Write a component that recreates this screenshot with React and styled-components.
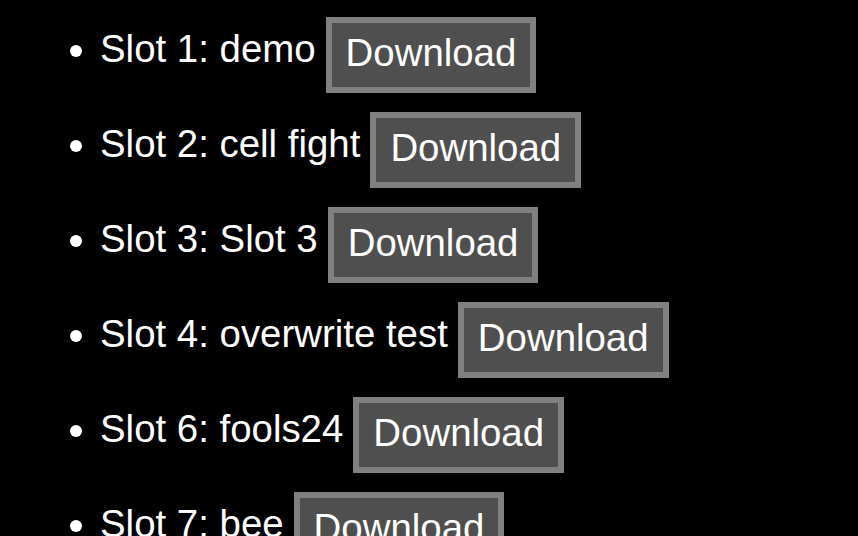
import React from "react";
import styled, { createGlobalStyle } from "styled-components";

const Global = createGlobalStyle`
  html, body {
    margin: 0;
    padding: 0;
    background: #000;
    overflow: hidden;
  }
  body {
    font-family: "Liberation Sans", Arial, Helvetica, sans-serif;
    color: #fff;
  }
`;

const Page = styled.div`
  height: 100vh;
  overflow: hidden;
  background: #000;
`;

const SlotList = styled.ul`
  margin: 0;
  padding: 17px 0 0 100px;
  list-style: disc;
  font-size: 38.4px;
`;

const SlotItem = styled.li`
  margin-bottom: 19px;
`;

const Row = styled.div`
  display: flex;
  align-items: flex-start;
  gap: 10px;
`;

const Label = styled.span`
  padding-top: 10px;
  line-height: 44px;
  white-space: nowrap;
`;

const DownloadButton = styled.button`
  font-family: inherit;
  font-size: 38.4px;
  line-height: 44px;
  color: #fff;
  background: #4f4f4f;
  border: 6px solid #808080;
  border-radius: 0;
  padding: 8px 14px 12px 14px;
  margin: 0;
  cursor: pointer;
  white-space: nowrap;
`;

const slots = [
  { id: 1, name: "demo" },
  { id: 2, name: "cell fight" },
  { id: 3, name: "Slot 3" },
  { id: 4, name: "overwrite test" },
  { id: 6, name: "fools24" },
  { id: 7, name: "bee" },
  { id: 8, name: "Slot 8" },
];

export default function App() {
  return (
    <Page>
      <Global />
      <SlotList>
        {slots.map((s) => (
          <SlotItem key={s.id}>
            <Row>
              <Label>
                Slot {s.id}: {s.name}
              </Label>
              <DownloadButton>Download</DownloadButton>
            </Row>
          </SlotItem>
        ))}
      </SlotList>
    </Page>
  );
}
